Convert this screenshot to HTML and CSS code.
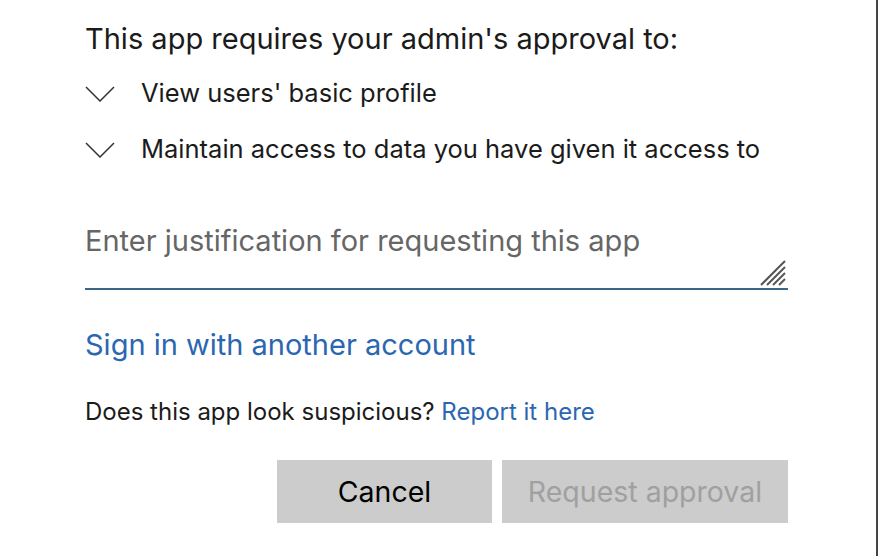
FILE: index.html
```html
<!DOCTYPE html>
<html lang="en">
<head>
<meta charset="utf-8">
<title>Permissions requested</title>
<link rel="stylesheet" href="styles.css">
</head>
<body>
<div class="page">
  <main class="dialog">
    <h1 class="title">This app requires your admin's approval to:</h1>
    <ul class="perms">
      <li class="perm">
        <svg class="chev" viewBox="0 0 30 16" width="30" height="16" aria-hidden="true"><path d="M1 1 L15 15 L29 1" fill="none" stroke="#333" stroke-width="1.5"/></svg>
        <span>View users' basic profile</span>
      </li>
      <li class="perm">
        <svg class="chev" viewBox="0 0 30 16" width="30" height="16" aria-hidden="true"><path d="M1 1 L15 15 L29 1" fill="none" stroke="#333" stroke-width="1.5"/></svg>
        <span>Maintain access to data you have given it access to</span>
      </li>
    </ul>
    <div class="field">
      <textarea class="just" placeholder="Enter justification for requesting this app"></textarea>
      <svg class="grip" viewBox="0 0 28 28" width="28" height="28" aria-hidden="true">
        <g stroke="#555" stroke-width="2" stroke-linecap="butt">
          <line x1="2" y1="26" x2="26" y2="2"/>
          <line x1="8" y1="26" x2="26" y2="8"/>
          <line x1="14" y1="26" x2="26" y2="14"/>
          <line x1="20" y1="26" x2="26" y2="20"/>
        </g>
      </svg>
    </div>
    <a class="switch" href="#">Sign in with another account</a>
    <p class="sus">Does this app look suspicious? <a class="report" href="#">Report it here</a></p>
    <div class="actions">
      <button class="btn cancel" type="button">Cancel</button>
      <button class="btn request" type="button" disabled>Request approval</button>
    </div>
  </main>
</div>
</body>
</html>
```
FILE: styles.css
```css
* { box-sizing: border-box; }
html, body { margin: 0; padding: 0; background: #fff; }
body { font-family: Inter, "Liberation Sans", sans-serif; color: #1b1b1b; }
.page {
  width: 878px;
  height: 556px;
  border-right: 2px solid #444;
  background: #fff;
  overflow: hidden;
}
.dialog {
  width: 788px;
  padding: 21px 0 0 85px;
  display: flex;
  flex-direction: column;
}
.title {
  margin: 0;
  font-size: 29px;
  line-height: 36px;
  font-weight: 400;
  color: #1b1b1b;
  white-space: nowrap;
}
.perms {
  list-style: none;
  margin: 8px 0 0;
  padding: 0;
}
.perm {
  height: 56px;
  display: flex;
  align-items: center;
  gap: 26px;
  font-size: 25.5px;
  line-height: 30px;
  white-space: nowrap;
}
.chev { flex: none; margin-top: 2px; }
.field {
  position: relative;
  margin-top: 40px;
  height: 73px;
}
.just {
  display: block;
  width: 100%;
  height: 73px;
  border: 0;
  border-bottom: 2px solid #3b6888;
  padding: 6px 0 0;
  margin: 0;
  font-family: Inter, "Liberation Sans", sans-serif;
  font-size: 29px;
  line-height: 36px;
  color: #1b1b1b;
  resize: none;
  outline: none;
  background: transparent;
}
.just::placeholder { color: #666; }
.grip {
  position: absolute;
  right: 1px;
  bottom: 3px;
}
.switch {
  margin-top: 37px;
  font-size: 29px;
  line-height: 36px;
  color: #2b67b1;
  text-decoration: none;
  align-self: flex-start;
}
.sus {
  margin: 34px 0 0;
  font-size: 24px;
  line-height: 30px;
  color: #1b1b1b;
  white-space: nowrap;
}
.report { color: #2b67b1; text-decoration: none; }
.actions {
  margin-top: 33px;
  display: flex;
  justify-content: flex-end;
  gap: 10px;
}
.btn {
  height: 63px;
  border: 0;
  background: #cccccc;
  font-family: Inter, "Liberation Sans", sans-serif;
  font-size: 28.5px;
  padding: 0;
}
.cancel { width: 215px; color: #000; }
.request { width: 286px; color: #a0a0a0; }
```
